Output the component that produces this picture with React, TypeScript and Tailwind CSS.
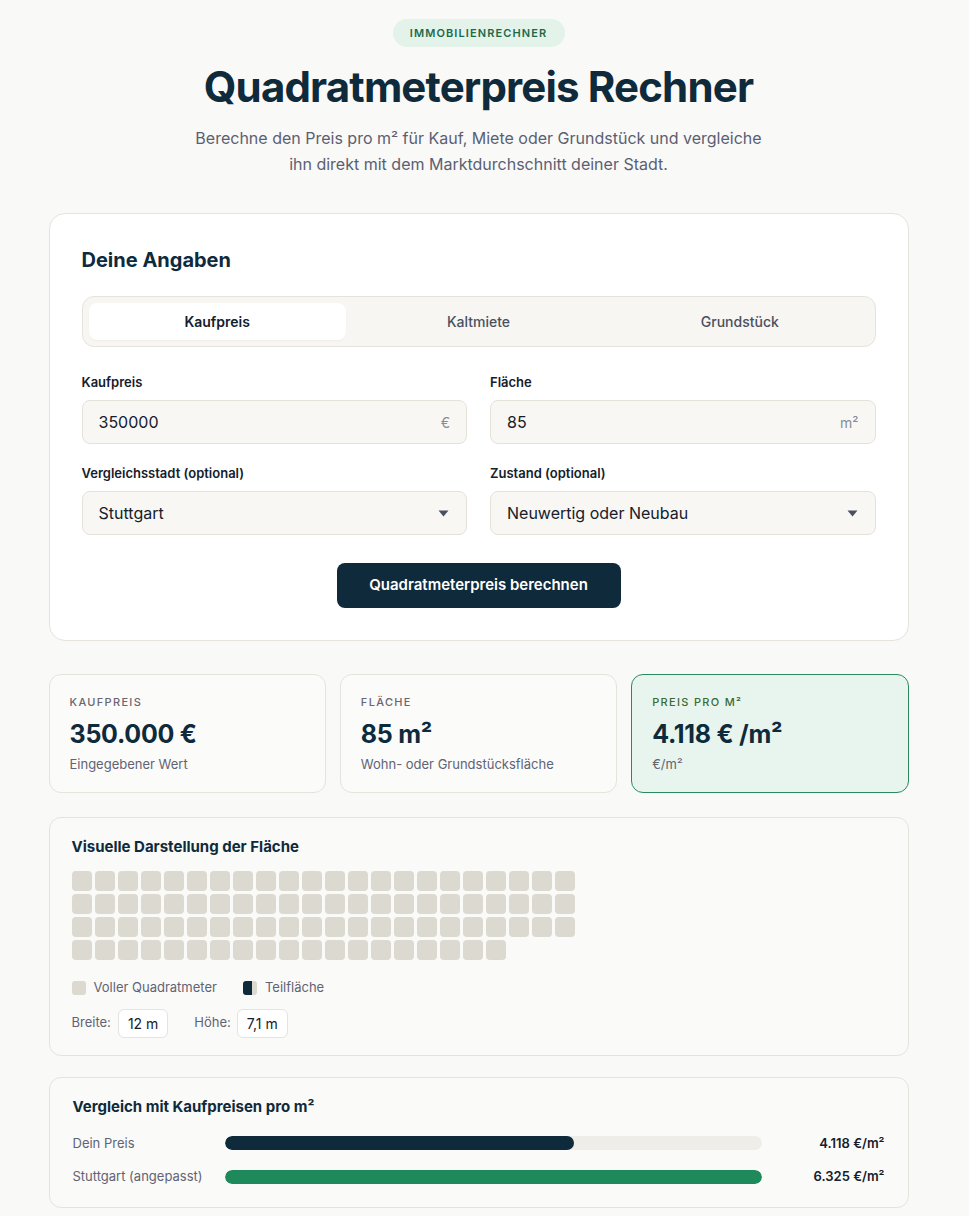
import React from "react";

const font = { fontFamily: "Inter, 'Noto Sans', sans-serif" };

function Stat({ label, value, sub, active }: { label: string; value: string; sub: string; active?: boolean }) {
  return (
    <div
      className={
        "rounded-xl border px-5 pt-[19px] pb-[18px] " +
        (active ? "border-[#2a8a5e] bg-[#e8f5ee]" : "border-[#e6e3dc] bg-[#fbfbf9]")
      }
    >
      <div className={"text-[11px] font-medium tracking-[0.12em] leading-4 " + (active ? "text-[#3b6b35]" : "text-[#6a6473]")}>{label}</div>
      <div className="mt-[8px] text-[25px] font-bold leading-8 text-[#0f2a3b] tracking-[-0.01em]">{value}</div>
      <div className="mt-[4px] text-[13px] leading-5 text-[#5f6375]">{sub}</div>
    </div>
  );
}

function Field({ label, value, suffix, select }: { label: string; value: string; suffix?: string; select?: boolean }) {
  return (
    <div className="flex flex-col">
      <div className="text-[13px] font-semibold leading-5 text-[#14202b]">{label}</div>
      <div className="mt-[8px] flex h-[44px] items-center justify-between rounded-lg border border-[#e5e2da] bg-[#f8f7f4] px-4">
        <span className="text-[16px] text-[#14202b]">{value}</span>
        {suffix && <span className="text-[14px] text-[#8a8d99]">{suffix}</span>}
        {select && (
          <svg width="11" height="7" viewBox="0 0 11 7" className="mr-[1px]">
            <path d="M0.5 0.5 L10.5 0.5 L5.5 6.5 Z" fill="#4b5060" />
          </svg>
        )}
      </div>
    </div>
  );
}

export default function App() {
  const full = 85;
  return (
    <div className="min-h-screen bg-[#f9f9f7] pb-10" style={font}>
      <div className="mx-auto w-[860px] -translate-x-[6px]">
        <div className="flex flex-col items-center pt-[19px]">
          <div className="flex h-[28px] w-[172px] items-center justify-center rounded-full bg-[#e3f3ea] text-[11px] font-semibold tracking-[0.1em] text-[#1d6a4a]">
            IMMOBILIENRECHNER
          </div>
          <h1 className="mt-[14px] text-[42px] font-bold leading-[52px] tracking-[-0.02em] text-[#0f2a3b]">
            Quadratmeterpreis Rechner
          </h1>
          <p className="mt-[12px] w-[580px] text-center text-[16px] leading-[26px] text-[#5b5f73]">
            Berechne den Preis pro m² für Kauf, Miete oder Grundstück und vergleiche ihn direkt mit dem Marktdurchschnitt deiner Stadt.
          </p>
        </div>

        <div className="mt-[36px] rounded-2xl border border-[#e6e3dc] bg-white px-8 pt-8 pb-8">
          <h2 className="text-[20px] font-bold leading-7 text-[#0f2a3b]">Deine Angaben</h2>
          <div className="mt-[22px] grid h-[51px] grid-cols-3 gap-[4px] rounded-xl border border-[#e6e3dc] bg-[#f7f6f2] p-[6px]">
            <div className="flex items-center justify-center rounded-lg bg-white text-[14px] font-semibold text-[#14202b] shadow-[0_1px_2px_rgba(0,0,0,0.04)]">Kaufpreis</div>
            <div className="flex items-center justify-center text-[14px] font-medium text-[#4b5060]">Kaltmiete</div>
            <div className="flex items-center justify-center text-[14px] font-medium text-[#4b5060]">Grundstück</div>
          </div>
          <div className="mt-[25px] grid grid-cols-2 gap-x-[23px] gap-y-[19px]">
            <Field label="Kaufpreis" value="350000" suffix="€" />
            <Field label="Fläche" value="85" suffix="m²" />
            <Field label="Vergleichsstadt (optional)" value="Stuttgart" select />
            <Field label="Zustand (optional)" value="Neuwertig oder Neubau" select />
          </div>
          <div className="mt-[28px] flex justify-center">
            <button className="h-[45px] w-[284px] rounded-lg bg-[#0f2a3b] text-[15px] font-semibold text-white">
              Quadratmeterpreis berechnen
            </button>
          </div>
        </div>

        <div className="mt-[33px] grid grid-cols-3 gap-[14px]">
          <Stat label="KAUFPREIS" value="350.000 €" sub="Eingegebener Wert" />
          <Stat label="FLÄCHE" value="85 m²" sub="Wohn- oder Grundstücksfläche" />
          <Stat label="PREIS PRO M²" value="4.118 € /m²" sub="€/m²" active />
        </div>

        <div className="mt-[24px] rounded-xl border border-[#e6e3dc] bg-[#fafaf8] px-[22px] pt-[19px] pb-[17px]">
          <h3 className="text-[15px] font-bold leading-5 text-[#0f2a3b]">Visuelle Darstellung der Fläche</h3>
          <div className="mt-[14px] grid w-[503px] grid-cols-[repeat(22,20px)] gap-[3px]">
            {Array.from({ length: full }).map((_, i) => (
              <div key={i} className="h-[20px] w-[20px] rounded-[4px] bg-[#dcd9d0]" />
            ))}
          </div>
          <div className="mt-[18px] flex items-center gap-[26px] text-[13px] text-[#5f6375]">
            <div className="flex items-center gap-[8px]">
              <div className="h-[14px] w-[14px] rounded-[3px] bg-[#dcd9d0]" />
              <span>Voller Quadratmeter</span>
            </div>
            <div className="flex items-center gap-[8px]">
              <div className="flex h-[14px] w-[14px] overflow-hidden rounded-[3px]">
                <div className="h-full w-[9px] bg-[#0f2a3b]" />
                <div className="h-full w-[5px] bg-[#dcd9d0]" />
              </div>
              <span>Teilfläche</span>
            </div>
          </div>
          <div className="mt-[11px] flex items-center text-[13px] text-[#5f6375]">
            <span>Breite:</span>
            <span className="ml-[7px] rounded-md border border-[#e6e3dc] bg-white px-[9px] py-[3px] text-[14px] text-[#14202b]">12 m</span>
            <span className="ml-[26px]">Höhe:</span>
            <span className="ml-[6px] rounded-md border border-[#e6e3dc] bg-white px-[9px] py-[3px] text-[14px] text-[#14202b]">7,1 m</span>
          </div>
        </div>

        <div className="mt-[21px] rounded-xl border border-[#e6e3dc] bg-[#fafaf8] px-[23px] pt-[19px] pb-[20px]">
          <h3 className="text-[15px] font-bold leading-5 text-[#0f2a3b]">Vergleich mit Kaufpreisen pro m²</h3>
          <div className="mt-[17px] flex flex-col gap-[14px]">
            <div className="flex items-center">
              <span className="w-[152px] text-[13px] text-[#5f6375]">Dein Preis</span>
              <div className="h-[14px] flex-1 overflow-hidden rounded-full bg-[#eeede7]">
                <div className="h-full rounded-full bg-[#0f2a3b]" style={{ width: "65.1%" }} />
              </div>
              <span className="w-[123px] text-right text-[13px] font-semibold text-[#14202b]">4.118 €/m²</span>
            </div>
            <div className="flex items-center">
              <span className="w-[152px] text-[13px] text-[#5f6375]">Stuttgart (angepasst)</span>
              <div className="h-[14px] flex-1 overflow-hidden rounded-full bg-[#eeede7]">
                <div className="h-full rounded-full bg-[#1e8a5c]" style={{ width: "100%" }} />
              </div>
              <span className="w-[123px] text-right text-[13px] font-semibold text-[#14202b]">6.325 €/m²</span>
            </div>
          </div>
        </div>
      </div>
    </div>
  );
}
